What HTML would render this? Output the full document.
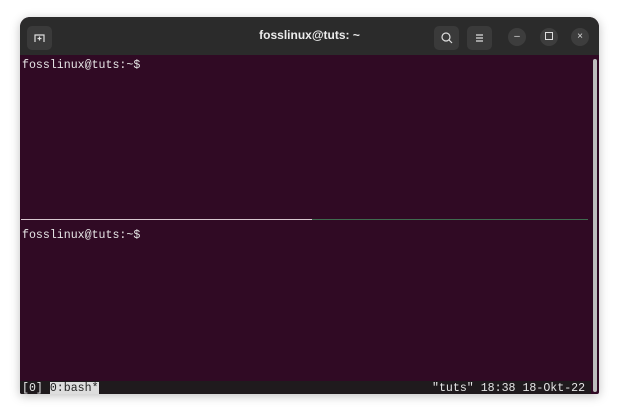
<!DOCTYPE html>
<html><head><style>
body{margin:0;width:619px;height:420px;background:#fff;position:relative;overflow:hidden;font-family:"Liberation Mono",monospace}
.win{position:absolute;left:20px;top:17px;width:579px;height:377px;border-radius:10px 10px 2px 2px;background:#300a24;overflow:hidden;box-shadow:0 2px 10px rgba(0,0,0,.25)}
.hd{position:absolute;left:0;top:0;width:579px;height:38px;background:#2b2b2b}
.btn{position:absolute;top:9px;width:25px;height:24px;border-radius:5px;background:#3a3a3a}
.c{position:absolute;top:11px;width:18px;height:18px;border-radius:50%;background:#3d3d3d;color:#ddd;font:10px "Liberation Sans",sans-serif;text-align:center;line-height:18px}
.title{position:absolute;left:0;right:0;top:11px;text-align:center;color:#ececec;font:bold 12px "Liberation Sans",sans-serif}
.t{position:absolute;left:2px;color:#e6e6e6;font-size:11.6px;white-space:pre}
</style></head><body>
<div class="win">
<div class="hd">
<div class="btn" style="left:7px"><svg width="25" height="24"><path d="M8 16V9h9v7M12.5 10.5v4M10.5 12.5h4" stroke="#ddd" fill="none" stroke-width="1.2"/></svg></div>
<div class="title">fosslinux@tuts: ~</div>
<div class="btn" style="left:414px"><svg width="25" height="24"><circle cx="12" cy="11" r="4" stroke="#ddd" fill="none" stroke-width="1.2"/><path d="M15 14l3 3" stroke="#ddd" stroke-width="1.2"/></svg></div>
<div class="btn" style="left:447px"><svg width="25" height="24"><path d="M9 9h7M9 12h7M9 15h7" stroke="#ddd" stroke-width="1.2"/></svg></div>
<div class="c" style="left:488px">–</div>
<div class="c" style="left:520px"><span style="display:inline-block;width:6px;height:6px;border:1px solid #ddd;vertical-align:-1px"></span></div>
<div class="c" style="left:551px">×</div>
</div>
<div class="t" style="top:42px">fosslinux@tuts:~$</div>
<div style="position:absolute;left:1px;top:202px;width:291px;height:1px;background:#d8c8d0"></div>
<div style="position:absolute;left:292px;top:202px;width:276px;height:1px;background:#3f6b4f"></div>
<div class="t" style="top:212px">fosslinux@tuts:~$</div>
<div style="position:absolute;left:0;top:364px;width:571px;height:13px;background:#1f1a1d"></div>
<div class="t" style="top:365px">[0] <span style="background:#ddd;color:#222">0:bash*</span></div>
<div class="t" style="top:365px;left:412px">"tuts" 18:38 18-Okt-22</div>
<div style="position:absolute;left:573px;top:42px;width:4px;height:333px;border-radius:2px;background:#bdbdbd"></div>
</div>
</body></html>
